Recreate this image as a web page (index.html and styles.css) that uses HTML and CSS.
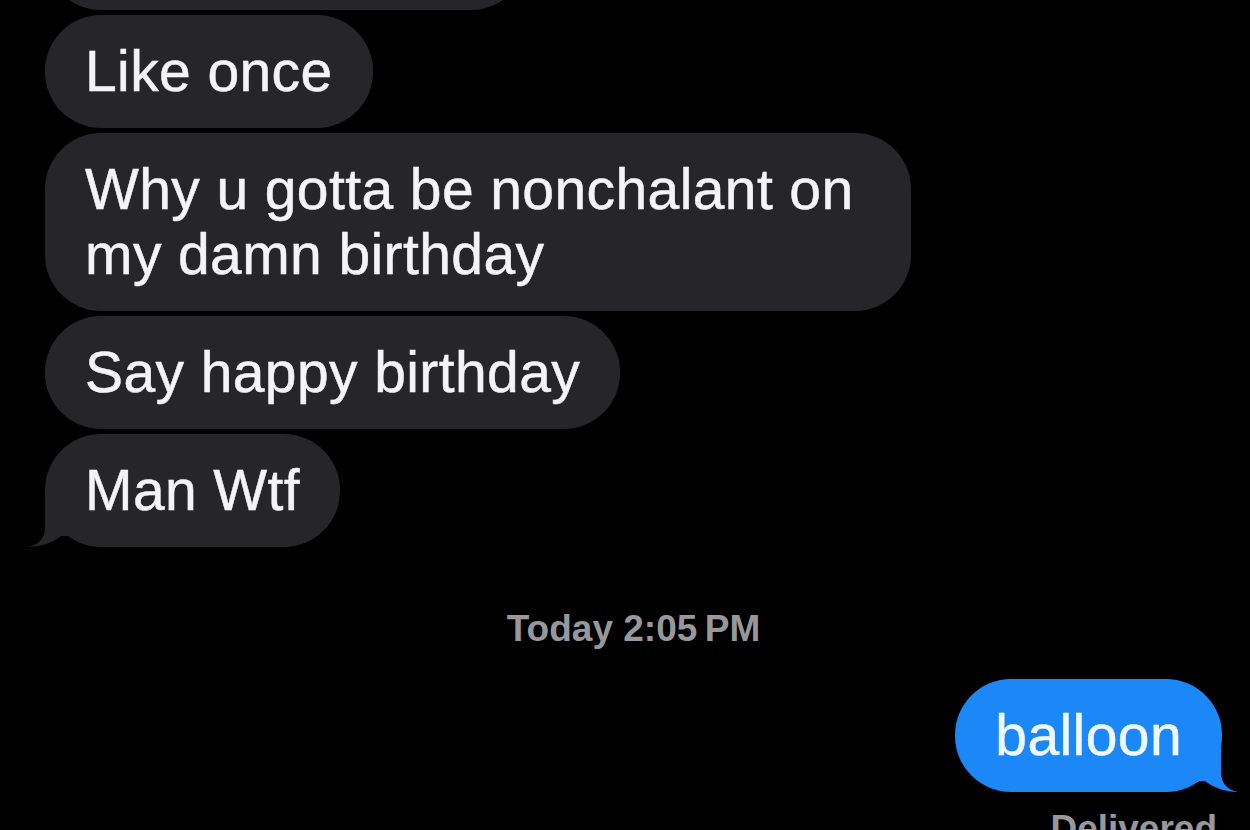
FILE: index.html
```html
<!DOCTYPE html>
<html lang="en">
<head>
<meta charset="utf-8">
<title>Messages</title>
<link rel="stylesheet" href="styles.css">
</head>
<body>
<main class="thread">
  <div class="bubble in">I said it already.</div>
  <div class="bubble in">Like once</div>
  <div class="bubble in">Why u gotta be nonchalant on my damn birthday</div>
  <div class="bubble in">Say happy birthday</div>
  <div class="bubble in tail">Man Wtf<svg class="tail-shape" viewBox="0 0 50 56" aria-hidden="true"><path d="M17 0 L17 36 C17 48 10 54 0 56 C12 56 24 52 33 45 L50 45 L50 0 Z"/></svg></div>
  <div class="stamp">Today 2:05&#8201;PM</div>
  <div class="bubble out tail">balloon<svg class="tail-shape" viewBox="0 0 50 56" aria-hidden="true"><path d="M17 0 L17 36 C17 48 10 54 0 56 C12 56 24 52 33 45 L50 45 L50 0 Z"/></svg></div>
  <div class="status">Delivered</div>
</main>
</body>
</html>
```
FILE: styles.css
```css
html, body {
  margin: 0;
  padding: 0;
  background: #000;
  height: 100%;
  overflow: hidden;
}

.thread {
  display: flex;
  flex-direction: column;
  gap: 5px;
  margin-top: -103px;
  padding: 0 28px 0 45px;
  font-family: "Liberation Sans", Arial, sans-serif;
}

.bubble {
  position: relative;
  box-sizing: border-box;
  max-width: 866px;
  padding: 24px 40px;
  border-radius: 56px;
  font-size: 57px;
  line-height: 65px;
  letter-spacing: 0.4px;
  color: #f4f4f6;
  -webkit-text-stroke: 0.5px currentColor;
}

.bubble.in {
  align-self: flex-start;
  background: #262629;
}

.bubble.out {
  align-self: flex-end;
  background: #1c87f6;
  color: #eef8ff;
}

.tail-shape {
  position: absolute;
  bottom: 0;
  width: 50px;
  height: 56px;
}

.in .tail-shape {
  left: -17px;
  fill: #262629;
}

.out .tail-shape {
  right: -16px;
  fill: #1c87f6;
  transform: scaleX(-1);
}

.stamp {
  margin-top: 55px;
  text-align: center;
  font-size: 37px;
  line-height: 44px;
  font-weight: 700;
  color: #98989c;
}

.stamp + .bubble {
  margin-top: 23px;
}

.status {
  align-self: flex-end;
  margin-top: 10px;
  padding-right: 5px;
  font-size: 37px;
  line-height: 44px;
  font-weight: 700;
  color: #98989c;
}
```
